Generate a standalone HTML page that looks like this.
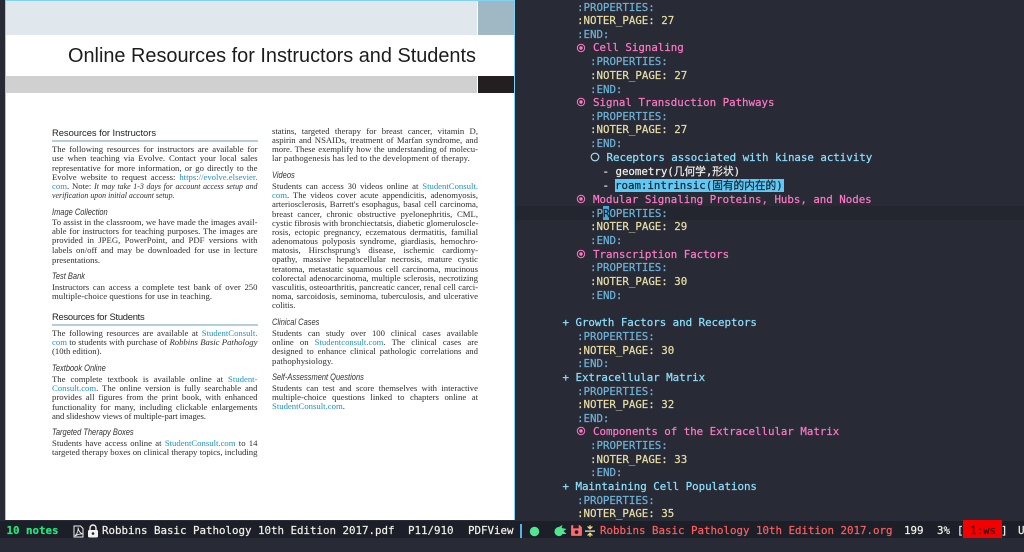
<!DOCTYPE html>
<html><head><meta charset="utf-8"><style>
html,body{margin:0;padding:0;background:#282a36;width:1024px;height:552px;overflow:hidden}
div{position:absolute}
#page{left:5px;top:0;width:510px;height:520px;background:#fff;border:1px solid #7fd4f5;border-bottom:none;box-sizing:border-box;overflow:hidden}
.l{left:52px;width:205.5px;height:10px;font:8.7px/10px "Liberation Serif",serif;color:#2e2e2e;text-align:justify;text-align-last:justify;white-space:nowrap;filter:blur(.25px)}
.r{left:272px;width:206px}
.n{text-align-last:left}
.l b{font-weight:normal;color:#1e93bd}
.l i.q{font-size:7.9px}
.h{font:9.4px/12px "Liberation Sans",sans-serif;color:#222;height:12px;white-space:nowrap;filter:blur(.2px)}
.s{font:italic 8.8px/12px "Liberation Sans",sans-serif;color:#333;height:12px;white-space:nowrap;transform:scaleX(.85);transform-origin:0 50%;filter:blur(.2px)}
.t{font:10.8px/14px "DejaVu Sans Mono","Noto Sans CJK SC",monospace;height:14px;white-space:nowrap;letter-spacing:-.02px;-webkit-text-stroke:.2px currentColor}
.p{color:#6fb3d8}.g{color:#e9dfa6}.k{color:#ff79c6}.c{color:#8be0fd}.w{color:#f1f1ea}
.m{font:10.8px/14px "DejaVu Sans Mono",monospace;white-space:nowrap;height:14px;top:524px;-webkit-text-stroke:.2px currentColor}
.z{font-size:10.7px;font-family:"Noto Sans CJK SC",sans-serif}
</style></head><body>
<div id="page"></div>
<div style="left:6px;top:1px;width:471px;height:34px;background:#e0e7ed"></div>
<div style="left:478px;top:1px;width:36px;height:34px;background:#a0b8c4"></div>
<div style="left:6px;top:76px;width:471px;height:17px;background:#d0d0d0"></div>
<div style="left:478px;top:76px;width:36px;height:17px;background:#231f20"></div>
<div style="left:68px;top:42.5px;width:409px;height:26px;font:19.9px/26px 'Liberation Sans',sans-serif;color:#1c1c1c;white-space:nowrap">Online Resources for Instructors and Students</div>

<div class="h" style="left:52px;top:127px;letter-spacing:-.03px">Resources for Instructors</div>
<div style="left:52px;top:140px;width:205.5px;height:2px;background:#b4cfdb"></div>
<div class="l" style="top:144px">The following resources for instructors are available for</div>
<div class="l" style="top:153px">use when teaching via Evolve. Contact your local sales</div>
<div class="l" style="top:162.5px">representative for more information, or go directly to the</div>
<div class="l" style="top:172px">Evolve website to request access: <b>https://evolve.elsevier.</b></div>
<div class="l" style="top:181px"><b>com</b>. Note: <i class="q">It may take 1-3 days for account access setup and</i></div>
<div class="l n" style="top:190px"><i class="q">verification upon initial account setup.</i></div>
<div class="s" style="left:52px;top:206px">Image Collection</div>
<div class="l" style="top:216.5px">To assist in the classroom, we have made the images avail-</div>
<div class="l" style="top:225.5px">able for instructors for teaching purposes. The images are</div>
<div class="l" style="top:235px">provided in JPEG, PowerPoint, and PDF versions with</div>
<div class="l" style="top:244.5px">labels on/off and may be downloaded for use in lecture</div>
<div class="l n" style="top:254.5px">presentations.</div>
<div class="s" style="left:52px;top:270px">Test Bank</div>
<div class="l" style="top:281.5px">Instructors can access a complete test bank of over 250</div>
<div class="l n" style="top:291px;letter-spacing:.04px">multiple-choice questions for use in teaching.</div>
<div class="h" style="left:52px;top:311px;letter-spacing:-.25px">Resources for Students</div>
<div style="left:52px;top:324px;width:205.5px;height:2px;background:#b4cfdb"></div>
<div class="l" style="top:327.5px">The following resources are available at <b>StudentConsult.</b></div>
<div class="l" style="top:337px"><b>com</b> to students with purchase of <i>Robbins Basic Pathology</i></div>
<div class="l n" style="top:346px">(10th edition).</div>
<div class="s" style="left:52px;top:362px">Textbook Online</div>
<div class="l" style="top:373.5px">The complete textbook is available online at <b>Student-</b></div>
<div class="l" style="top:383px"><b>Consult.com</b>. The online version is fully searchable and</div>
<div class="l" style="top:392px">provides all figures from the print book, with enhanced</div>
<div class="l" style="top:401.5px">functionality for many, including clickable enlargements</div>
<div class="l n" style="top:410.5px;letter-spacing:-.09px">and slideshow views of multiple-part images.</div>
<div class="s" style="left:52px;top:426px">Targeted Therapy Boxes</div>
<div class="l" style="top:438px">Students have access online at <b>StudentConsult.com</b> to 14</div>
<div class="l" style="top:447px">targeted therapy boxes on clinical therapy topics, including</div>

<div class="l r" style="top:126px">statins, targeted therapy for breast cancer, vitamin D,</div>
<div class="l r" style="top:135px">aspirin and NSAIDs, treatment of Marfan syndrome, and</div>
<div class="l r" style="top:144px">more. These exemplify how the understanding of molecu-</div>
<div class="l r n" style="top:153px;letter-spacing:.13px">lar pathogenesis has led to the development of therapy.</div>
<div class="s" style="left:272px;top:169px">Videos</div>
<div class="l r" style="top:181px">Students can access 30 videos online at <b>StudentConsult.</b></div>
<div class="l r" style="top:190px"><b>com</b>. The videos cover acute appendicitis, adenomyosis,</div>
<div class="l r" style="top:199px">arteriosclerosis, Barrett's esophagus, basal cell carcinoma,</div>
<div class="l r" style="top:208.5px">breast cancer, chronic obstructive pyelonephritis, CML,</div>
<div class="l r" style="top:217.5px">cystic fibrosis with bronchiectatsis, diabetic glomeruloscle-</div>
<div class="l r" style="top:227px">rosis, ectopic pregnancy, eczematous dermatitis, familial</div>
<div class="l r" style="top:236px">adenomatous polyposis syndrome, giardiasis, hemochro-</div>
<div class="l r" style="top:245px">matosis, Hirschsprung's disease, ischemic cardiomy-</div>
<div class="l r" style="top:254px">opathy, massive hepatocellular necrosis, mature cystic</div>
<div class="l r" style="top:263.5px">teratoma, metastatic squamous cell carcinoma, mucinous</div>
<div class="l r" style="top:273px">colorectal adenocarcinoma, multiple sclerosis, necrotizing</div>
<div class="l r" style="top:282px">vasculitis, osteoarthritis, pancreatic cancer, renal cell carci-</div>
<div class="l r" style="top:291px">noma, sarcoidosis, seminoma, tuberculosis, and ulcerative</div>
<div class="l r n" style="top:300px">colitis.</div>
<div class="s" style="left:272px;top:316px">Clinical Cases</div>
<div class="l r" style="top:328px">Students can study over 100 clinical cases available</div>
<div class="l r" style="top:337px">online on <b>Studentconsult.com</b>. The clinical cases are</div>
<div class="l r" style="top:346px">designed to enhance clinical pathologic correlations and</div>
<div class="l r n" style="top:355.5px;letter-spacing:.1px">pathophysiology.</div>
<div class="s" style="left:272px;top:371px">Self-Assessment Questions</div>
<div class="l r" style="top:383px">Students can test and score themselves with interactive</div>
<div class="l r" style="top:392px">multiple-choice questions linked to chapters online at</div>
<div class="l r n" style="top:401px"><b>StudentConsult.com</b>.</div>

<!-- org buffer -->
<div style="left:516px;top:206px;width:508px;height:14px;background:#23252f"></div>
<div class="t p" style="left:577px;top:1px">:PROPERTIES:</div>
<div class="t g" style="left:577px;top:14px">:NOTER_PAGE: 27</div>
<div class="t p" style="left:577px;top:28px">:END:</div>
<svg style="position:absolute;left:576px;top:43px" width="10" height="10"><circle cx="5" cy="5" r="3.7" fill="none" stroke="#ff79c6"/><circle cx="5" cy="5" r="1.7" fill="#ff79c6"/></svg>
<div class="t k" style="left:593px;top:41px">Cell Signaling</div>
<div class="t p" style="left:590px;top:55px">:PROPERTIES:</div>
<div class="t g" style="left:590px;top:69px">:NOTER_PAGE: 27</div>
<div class="t p" style="left:590px;top:83px">:END:</div>
<svg style="position:absolute;left:576px;top:97px" width="10" height="10"><circle cx="5" cy="5" r="3.7" fill="none" stroke="#ff79c6"/><circle cx="5" cy="5" r="1.7" fill="#ff79c6"/></svg>
<div class="t k" style="left:593px;top:96px">Signal Transduction Pathways</div>
<div class="t p" style="left:590px;top:110px">:PROPERTIES:</div>
<div class="t g" style="left:590px;top:123px">:NOTER_PAGE: 27</div>
<div class="t p" style="left:590px;top:137px">:END:</div>
<svg style="position:absolute;left:590px;top:152px" width="10" height="10"><circle cx="5" cy="5" r="3.8" fill="none" stroke="#a5e3f8" stroke-width="1.1"/></svg>
<div class="t c" style="left:606.5px;top:151px">Receptors associated with kinase activity</div>
<div class="t w" style="left:602.5px;top:165px">- geometry(<span class="z">几何学</span>,<span class="z">形状</span>)</div>
<div class="t w" style="left:602.5px;top:179px">-</div>
<div style="left:615px;top:179px;width:169px;height:13px;background:#5fc9f5"></div>
<div class="t" style="left:615px;top:179px;color:#15222e">roam:intrinsic(<span class="z">固有的内在的</span>)</div>
<svg style="position:absolute;left:576px;top:194px" width="10" height="10"><circle cx="5" cy="5" r="3.7" fill="none" stroke="#ff79c6"/><circle cx="5" cy="5" r="1.7" fill="#ff79c6"/></svg>
<div class="t k" style="left:593px;top:193px">Modular Signaling Proteins, Hubs, and Nodes</div>
<div style="left:602.5px;top:206px;width:6.5px;height:14px;background:#46a8d8"></div>
<div class="t p" style="left:590px;top:207px">:P<span style="color:#18222e">R</span>OPERTIES:</div>
<div class="t g" style="left:590px;top:220px">:NOTER_PAGE: 29</div>
<div class="t p" style="left:590px;top:234px">:END:</div>
<svg style="position:absolute;left:576px;top:249px" width="10" height="10"><circle cx="5" cy="5" r="3.7" fill="none" stroke="#ff79c6"/><circle cx="5" cy="5" r="1.7" fill="#ff79c6"/></svg>
<div class="t k" style="left:593px;top:248px">Transcription Factors</div>
<div class="t p" style="left:590px;top:261px">:PROPERTIES:</div>
<div class="t g" style="left:590px;top:275px">:NOTER_PAGE: 30</div>
<div class="t p" style="left:590px;top:289px">:END:</div>
<div class="t c" style="left:562.5px;top:316px">+ Growth Factors and Receptors</div>
<div class="t p" style="left:577px;top:330px">:PROPERTIES:</div>
<div class="t g" style="left:577px;top:344px">:NOTER_PAGE: 30</div>
<div class="t p" style="left:577px;top:357px">:END:</div>
<div class="t c" style="left:562.5px;top:371px">+ Extracellular Matrix</div>
<div class="t p" style="left:577px;top:385px">:PROPERTIES:</div>
<div class="t g" style="left:577px;top:398px">:NOTER_PAGE: 32</div>
<div class="t p" style="left:577px;top:412px">:END:</div>
<svg style="position:absolute;left:576px;top:426px" width="10" height="10"><circle cx="5" cy="5" r="3.7" fill="none" stroke="#ff79c6"/><circle cx="5" cy="5" r="1.7" fill="#ff79c6"/></svg>
<div class="t k" style="left:593px;top:425px">Components of the Extracellular Matrix</div>
<div class="t p" style="left:590px;top:439px">:PROPERTIES:</div>
<div class="t g" style="left:590px;top:453px">:NOTER_PAGE: 33</div>
<div class="t p" style="left:590px;top:466px">:END:</div>
<div class="t c" style="left:562.5px;top:480px">+ Maintaining Cell Populations</div>
<div class="t p" style="left:577px;top:494px">:PROPERTIES:</div>
<div class="t g" style="left:577px;top:507px">:NOTER_PAGE: 35</div>

<!-- mode line -->
<div style="left:0;top:521px;width:1024px;height:17px;background:#1d1f28"></div>
<div class="m" style="left:6.5px;color:#22e67a;font-weight:bold">10 notes</div>
<svg style="position:absolute;left:73px;top:525px" width="11" height="13" viewBox="0 0 11 13"><path d="M1 1h6.5L10 3.5V12H1z" fill="#1d1f28" stroke="#eee" stroke-width="1"/><path d="M2 11C5 8 5.500 4 5 2.500 5.500 6 7 8 9.500 9 7 8.800 4.500 9.500 2 11z" fill="none" stroke="#eee" stroke-width=".9"/></svg>
<svg style="position:absolute;left:87px;top:524px" width="12" height="14" viewBox="0 0 12 14"><path d="M3 6V4a3 3 0 0 1 6 0v2" fill="none" stroke="#f2f2f2" stroke-width="1.4"/><rect x="1" y="6" width="10" height="7.500" rx="1.200" fill="#f2f2f2"/><circle cx="6" cy="9.500" r="1.300" fill="#1d1f28"/></svg>
<div class="m w" style="left:102px">Robbins Basic Pathology 10th Edition 2017.pdf</div>
<div class="m w" style="left:408px">P11/910</div>
<div class="m w" style="left:468px">PDFView</div>
<div style="left:520px;top:524px;width:2px;height:14px;background:#52b4e6"></div>
<svg style="position:absolute;left:529px;top:526px" width="11" height="11"><circle cx="5.500" cy="5.500" r="4.700" fill="#50e690"/></svg>
<svg style="position:absolute;left:553px;top:524px" width="15" height="14" viewBox="0 0 14 14"><path d="M1 8c0-3 2-5 4.500-5L9 1 8 4l5 1-3 2 3 3-4 0c-1 2-3 2.500-4.500 2C3 11.500 1 10 1 8z" fill="#50e690"/></svg>
<svg style="position:absolute;left:570px;top:524px" width="13" height="13" viewBox="0 0 12 12"><path d="M1 2a1 1 0 0 1 1-1h7l2 2v7a1 1 0 0 1-1 1H2a1 1 0 0 1-1-1z" fill="#ff6b6b"/><rect x="3" y="1" width="5" height="3" fill="#1d1f28"/><circle cx="6" cy="7.500" r="1.700" fill="#1d1f28"/></svg>
<svg style="position:absolute;left:584px;top:524px" width="12" height="14" viewBox="0 0 12 14"><path d="M6 1v3.500M3.500 2.500 6 5l2.500-2.500" fill="#f0d878" stroke="#f0d878"/><rect x="1" y="6.500" width="10" height="1.200" fill="#eee"/><path d="M6 13V9.500M3.500 11.500 6 9l2.500 2.500" fill="#f0d878" stroke="#f0d878"/></svg>
<div class="m" style="left:600px;color:#ff5f5f">Robbins Basic Pathology 10th Edition 2017.org</div>
<div class="m w" style="left:904px">199</div>
<div class="m w" style="left:937px">3%</div>
<div class="m w" style="left:957px">[</div>
<div style="left:963px;top:520px;width:39px;height:18px;background:#f40000"></div>
<div class="m" style="left:970px;color:#2a0508">1:ws</div>
<div class="m w" style="left:1001px">]</div>
<div class="m w" style="left:1018px">U</div>
</body></html>
